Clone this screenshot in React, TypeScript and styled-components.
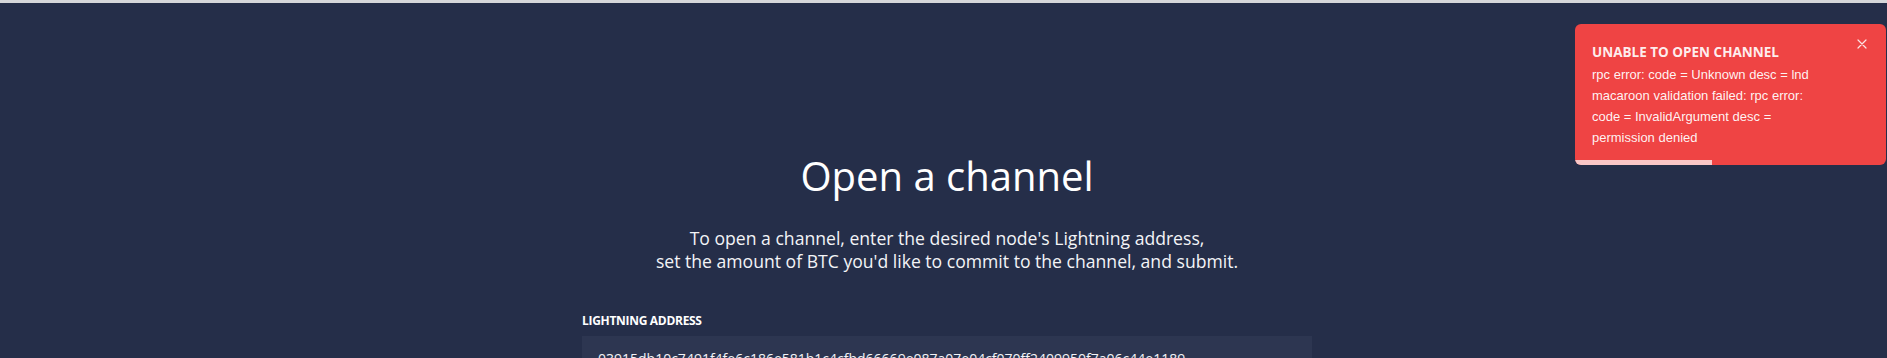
import React from 'react';
import styled, { createGlobalStyle } from 'styled-components';

const GlobalStyle = createGlobalStyle`
  html, body {
    margin: 0;
    padding: 0;
    background: #252e49;
    overflow: hidden;
  }
  body {
    font-family: "Open Sans", "Noto Sans", sans-serif;
  }
`;

const Page = styled.div`
  position: relative;
  height: 358px;
  box-sizing: border-box;
  border-top: 3px solid #d6d7da;
  background: #252e49;
  color: #ffffff;
  overflow: hidden;
`;

const Content = styled.main`
  width: 730px;
  margin: 0 auto;
  padding: 149px 0 0 7px;
  display: flex;
  flex-direction: column;
`;

const Title = styled.h1`
  margin: 0;
  font-size: 40px;
  line-height: 48px;
  font-weight: 400;
  text-align: center;
  color: #ffffff;
`;

const Subtitle = styled.p`
  margin: 27px 0 0;
  font-size: 17.6px;
  line-height: 23px;
  text-align: center;
  color: #f3f4f7;
`;

const Field = styled.div`
  margin-top: 39px;
  display: flex;
  flex-direction: column;
  gap: 7px;
`;

const Label = styled.label`
  font-size: 12px;
  line-height: 17px;
  font-weight: 700;
  letter-spacing: -0.3px;
  text-transform: uppercase;
  color: #ffffff;
`;

const Input = styled.input`
  box-sizing: border-box;
  width: 730px;
  height: 48px;
  padding: 10px 16px 14px;
  border: none;
  outline: none;
  background: #2d3651;
  color: #f2f3f6;
  font-family: "Open Sans", sans-serif;
  font-size: 14px;
  line-height: 24px;
`;

const Toast = styled.div`
  position: absolute;
  top: 21px;
  right: 1px;
  width: 311px;
  height: 141px;
  box-sizing: border-box;
  padding: 17px 0 0 17px;
  background: #ef4444;
  border-radius: 6px;
  overflow: hidden;
  color: #ffffff;
`;

const ToastTitle = styled.div`
  font-family: "Open Sans", sans-serif;
  font-size: 13.5px;
  line-height: 22px;
  font-weight: 700;
  text-transform: uppercase;
  color: rgba(255, 255, 255, 0.92);
`;

const ToastBody = styled.div`
  width: 238px;
  margin-top: 1px;
  font-family: "Liberation Sans", Arial, sans-serif;
  font-size: 13px;
  line-height: 21px;
  color: rgba(255, 255, 255, 0.94);
`;

const CloseButton = styled.button`
  position: absolute;
  top: 12px;
  right: 16px;
  width: 16px;
  height: 16px;
  padding: 0;
  border: none;
  background: transparent;
  display: flex;
  align-items: center;
  justify-content: center;
  cursor: pointer;
`;

const Progress = styled.div<{ $value: number }>`
  position: absolute;
  left: 0;
  bottom: 0;
  height: 5px;
  width: ${(p) => p.$value}%;
  background: rgba(255, 255, 255, 0.7);
`;

const address =
  '03915db10c7491f4fe6c186e581b1c4cfbd66669e087a07e04cf070ff2409950f7a06c44e1189';

export default function App() {
  return (
    <>
      <GlobalStyle />
      <Page>
        <Content>
          <Title>Open a channel</Title>
          <Subtitle>
            To open a channel, enter the desired node's Lightning address,
            <br />
            set the amount of BTC you'd like to commit to the channel, and submit.
          </Subtitle>
          <Field>
            <Label htmlFor="address">Lightning address</Label>
            <Input id="address" defaultValue={address} readOnly />
          </Field>
        </Content>

        <Toast role="alert">
          <ToastTitle>Unable to open channel</ToastTitle>
          <ToastBody>
            rpc error: code = Unknown desc = lnd macaroon validation failed: rpc
            error: code = InvalidArgument desc = permission denied
          </ToastBody>
          <CloseButton aria-label="close">
            <svg width="10" height="10" viewBox="0 0 10 10">
              <path
                d="M1 1 L9 9 M9 1 L1 9"
                stroke="rgba(255,255,255,0.85)"
                strokeWidth="1.2"
                strokeLinecap="round"
              />
            </svg>
          </CloseButton>
          <Progress $value={44} />
        </Toast>
      </Page>
    </>
  );
}
